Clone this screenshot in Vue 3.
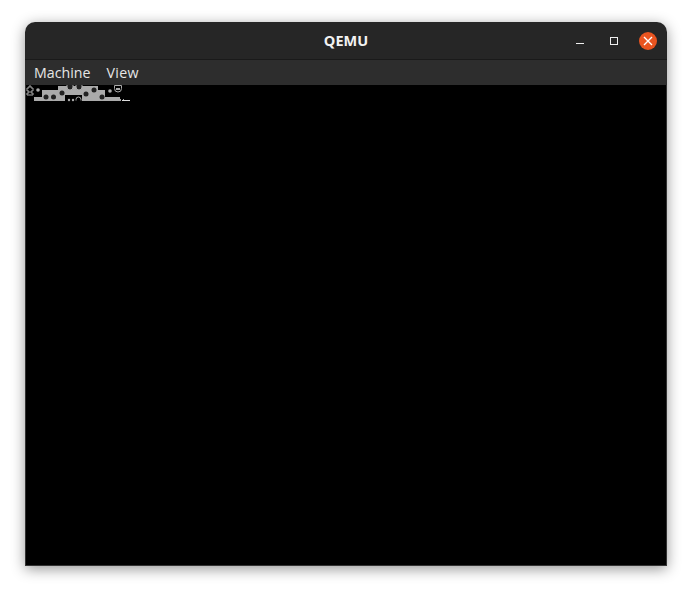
<script setup>
const bars = 'M16 5h23v7h-23zM8 12h31v4h-31zM32 1h40v9h-40zM56 5h23v11h-23zM72 12h22v4h-22z'
const holes = [[20,12,2.500],[27.500,12,2.500],[36,8,2.500],[60,9,2.500],[68,5,2.500],[76,12,2.500]]
const dots = [[12,5,1.800],[84,6,1.800],[43,15,1.200],[47,15,1.200]]
</script>

<template>
  <div class="page">
    <div class="window">
      <header class="titlebar">
        <span class="title">QEMU</span>
        <div class="controls">
          <svg class="ctl" width="14" height="14" viewBox="0 0 14 14"><path d="M3 9.500h8" stroke="#eee" stroke-width="1" /></svg>
          <svg class="ctl" width="14" height="14" viewBox="0 0 14 14"><rect x="3.500" y="3.500" width="7" height="7" fill="none" stroke="#eee" /></svg>
          <span class="close">
            <svg width="18" height="18" viewBox="0 0 18 18"><path d="M5 5l8 8M13 5l-8 8" stroke="#fff" stroke-width="1.400" /></svg>
          </span>
        </div>
      </header>
      <nav class="menubar">
        <span class="menu">Machine</span>
        <span class="menu">View</span>
      </nav>
      <main class="screen">
        <svg class="garbage" width="106" height="18" viewBox="0 0 106 18">
          <path :d="bars" fill="#aaa" />
          <circle v-for="(h, i) in holes" :key="'h' + i" :cx="h[0]" :cy="h[1]" :r="h[2]" fill="#222" />
          <circle v-for="(d, i) in dots" :key="'d' + i" :cx="d[0]" :cy="d[1]" :r="d[2]" fill="#aaa" />
          <path d="M3 1h2v2h2v3h-2v2h2v2h-6v-2h2v-2h-2v-3h2z" fill="none" stroke="#aaa" stroke-width="1" />
          <path d="M41 0v2a3 3 0 0 0 6 0v-2M50 0v2a3 3 0 0 0 6 0v-2" fill="#222" stroke="#aaa" />
          <path d="M50 15.500v-1a2.500 2.500 0 0 1 5 0v1" fill="none" stroke="#aaa" />
          <path d="M88.500 0.500h7v3a3.500 3.500 0 0 1-7 0z" fill="none" stroke="#aaa" />
          <path d="M90 3h4v2h-4z" fill="#aaa" />
          <path d="M94 14h1v2h-1zM97 14h1v2h-1zM90 14h1v2h-1z" fill="#aaa" />
          <path d="M96 15.500h8" stroke="#ddd" />
        </svg>
      </main>
    </div>
  </div>
</template>

<style>
html, body { margin: 0; background: #fff; }
</style>

<style scoped>
.page {
  width: 692px;
  height: 594px;
  box-sizing: border-box;
  padding: 22px 25px 28px;
  overflow: hidden;
  background: #fff;
}
.window {
  width: 642px;
  height: 544px;
  display: flex;
  flex-direction: column;
  border-radius: 10px 10px 0 0;
  overflow: hidden;
  box-shadow: 0 3px 14px rgba(0, 0, 0, 0.42);
  font-family: "Open Sans", "Noto Sans", sans-serif;
}
.titlebar {
  height: 37px;
  flex: none;
  display: flex;
  align-items: center;
  justify-content: center;
  position: relative;
  background: #262626;
  border-bottom: 1px solid #1a1a1a;
}
.title {
  color: #f2f2f2;
  font-size: 14.500px;
  font-weight: 700;
}
.controls {
  position: absolute;
  right: 10px;
  top: 10px;
  display: flex;
  align-items: center;
  gap: 20px;
}
.close {
  width: 18px;
  height: 18px;
  margin-left: -2px;
  border-radius: 50%;
  background: #e95420;
  display: flex;
}
.menubar {
  height: 25px;
  flex: none;
  display: flex;
  align-items: center;
  gap: 16px;
  padding-left: 9px;
  background: #2d2d2d;
  color: #e6e6e6;
  font-size: 14.200px;
}
.menu + .menu {
  letter-spacing: 0.4px;
}
.screen {
  flex: 1;
  background: #000;
  border: solid #333;
  border-width: 0 1px 1px 1px;
}
.garbage {
  display: block;
}
</style>
